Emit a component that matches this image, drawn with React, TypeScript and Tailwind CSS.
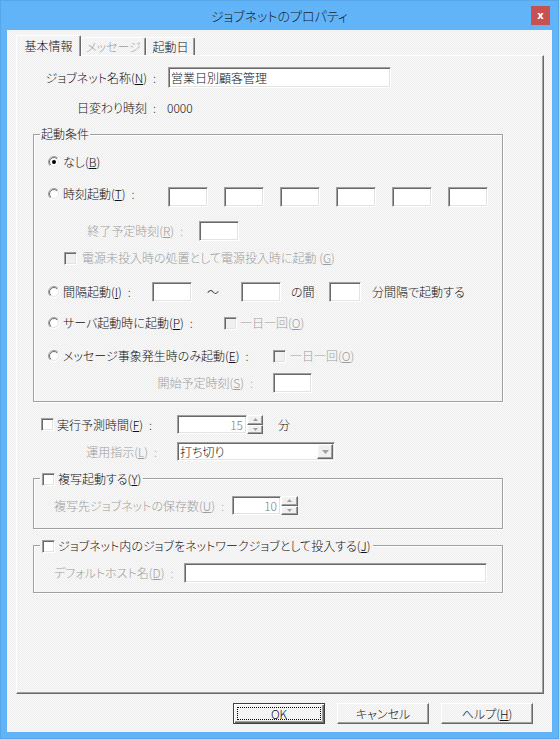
import React from "react";

const checker =
  "bg-[image:repeating-conic-gradient(#efefef_0_25%,#f8f8f8_0_50%)] bg-[length:2px_2px]";
const sunken =
  "border border-t-[#a0a0a0] border-l-[#a0a0a0] border-b-white border-r-white shadow-[inset_1px_1px_0_#696969,inset_-1px_-1px_0_#e3e3e3]";
const raised =
  "border border-t-white border-l-white border-b-[#696969] border-r-[#696969] shadow-[inset_-1px_-1px_0_#a0a0a0,inset_1px_1px_0_#f4f4f4]";

function Radio({ checked }: { checked?: boolean }) {
  return (
    <svg width="12" height="12" viewBox="0 0 12 12" className="shrink-0">
      <defs>
        <linearGradient id="ro" x1="0" y1="0" x2="1" y2="1">
          <stop offset="0.5" stopColor="#a0a0a0" />
          <stop offset="0.5" stopColor="#ffffff" />
        </linearGradient>
        <linearGradient id="ri" x1="0" y1="0" x2="1" y2="1">
          <stop offset="0.5" stopColor="#696969" />
          <stop offset="0.5" stopColor="#e3e3e3" />
        </linearGradient>
      </defs>
      <circle cx="6" cy="6" r="5.5" fill="none" stroke="url(#ro)" />
      <circle cx="6" cy="6" r="4.5" fill="#ffffff" stroke="url(#ri)" />
      {checked && <circle cx="6" cy="6" r="2" fill="#000000" />}
    </svg>
  );
}

function Check({ disabled }: { disabled?: boolean }) {
  return (
    <div
      className={`${sunken} w-[13px] h-[13px] shrink-0 ${
        disabled ? "bg-[#f0f0f0]" : "bg-white"
      }`}
    />
  );
}

function Box({ className }: { className: string }) {
  return <div className={`${sunken} bg-white shrink-0 ${className}`} />;
}

function Arrow({ up }: { up?: boolean }) {
  return (
    <svg width="5" height="3" viewBox="0 0 5 3">
      <path d={up ? "M2.5 0L5 3H0z" : "M0 0H5L2.5 3z"} fill="#a0a0a0" />
    </svg>
  );
}

function Spin({ value, w, bw }: { value: string; w: string; bw: string }) {
  return (
    <div className="flex h-[19px] shrink-0">
      <div
        className={`${sunken} bg-white h-full ${w} flex items-center justify-end pr-[3px] text-[#7a7a7a] leading-[16px]`}
      >
        {value}
      </div>
      <div className={`flex flex-col h-full ${bw}`}>
        <div className={`${raised} flex-1 flex items-center justify-center bg-[#f0f0f0]`}>
          <Arrow up />
        </div>
        <div className={`${raised} flex-1 flex items-center justify-center bg-[#f0f0f0]`}>
          <Arrow />
        </div>
      </div>
    </div>
  );
}

const gray = "text-[#9d9d9d]";
const groupBox =
  "relative ml-[16px] w-[470px] border border-[#a0a0a0] shadow-[inset_1px_1px_0_#fff,1px_1px_0_#fff] flex flex-col";

export default function App() {
  return (
    <div className="w-[559px] h-[739px] bg-[#62b4f9] border border-[#58a6ea] flex flex-col overflow-hidden font-['Noto_Sans_CJK_JP','Noto_Sans_CJK_SC',sans-serif] font-light text-[12px] leading-[16px] text-[#111] [font-feature-settings:'palt']">
      {/* title bar */}
      <div className="h-[29px] shrink-0 grid grid-cols-[1fr_auto_1fr] items-center">
        <div />
        <div className="text-[13px] text-[#1c1c1c] leading-[18px]">ジョブネットのプロパティ</div>
        <div className="flex justify-end pr-[8px]">
          <div className="w-[19px] h-[19px] bg-[#c75050] flex items-center justify-center text-white text-[10px] font-bold leading-none font-['DejaVu_Sans',sans-serif]">
            x
          </div>
        </div>
      </div>

      {/* client area */}
      <div className={`flex-1 mx-[6px] mb-[6px] ${checker} flex flex-col pt-[5px] pl-[9px] pr-[8px]`}>
        {/* tabs */}
        <div className="flex items-end h-[20px] shrink-0">
          <div className={`relative z-10 -mb-px w-[65px] h-[21px] ${checker} border-t border-l border-white border-r border-r-[#696969] shadow-[inset_-1px_0_0_#a0a0a0] rounded-t-[2px] flex items-start justify-center pt-[2px]`}>
            基本情報
          </div>
          <div className={`w-[65px] h-[18px] ${checker} border-t border-l border-white border-r border-r-[#696969] shadow-[inset_-1px_0_0_#a0a0a0] rounded-t-[2px] flex items-center justify-center ${gray}`}>
            メッセージ
          </div>
          <div className={`w-[49px] h-[18px] ${checker} border-t border-l border-white border-r border-r-[#696969] shadow-[inset_-1px_0_0_#a0a0a0] rounded-t-[2px] flex items-center justify-center`}>
            起動日
          </div>
        </div>

        {/* panel */}
        <div className="h-[639px] shrink-0 border-t border-l border-white border-r border-b border-r-[#696969] border-b-[#696969] shadow-[inset_-1px_-1px_0_#a0a0a0] flex flex-col">
          {/* name row */}
          <div className="flex items-center h-[21px] mt-[11px]">
            <div className="w-[139px] text-right">
              ジョブネット名称(<u>N</u>)<span className="ml-[6px]">:</span>
            </div>
            <div className={`${sunken} bg-white ml-[12px] w-[223px] h-[21px] flex items-center pl-[2px]`}>
              営業日別顧客管理
            </div>
          </div>
          {/* day change */}
          <div className="flex items-center h-[16px] mt-[12px]">
            <div className="w-[139px] text-right">
              日変わり時刻<span className="ml-[6px]">:</span>
            </div>
            <div className="ml-[11px]">0000</div>
          </div>

          {/* group 1 */}
          <div className={`${groupBox} mt-[18px] pt-[17px] pb-[8px]`}>
            <div className={`absolute left-[6px] top-[-9px] px-[1px] ${checker}`}>起動条件</div>

            <div className="h-[20px] flex items-center pl-[14px]">
              <Radio checked />
              <span className="pl-[3px]">なし(<u>B</u>)</span>
            </div>

            <div className="h-[20px] mt-[15px] flex items-start pl-[14px]">
              <div className="h-[16px] -mt-px flex items-center w-[120px] shrink-0">
                <Radio />
                <span className="pl-[3px]">
                  時刻起動(<u>T</u>)<span className="ml-[6px]">:</span>
                </span>
              </div>
              <Box className="w-[40px] h-[20px]" />
              <Box className="w-[40px] h-[20px] ml-[16px]" />
              <Box className="w-[40px] h-[20px] ml-[16px]" />
              <Box className="w-[40px] h-[20px] ml-[16px]" />
              <Box className="w-[40px] h-[20px] ml-[16px]" />
              <Box className="w-[40px] h-[20px] ml-[16px]" />
            </div>

            <div className="h-[20px] mt-[14px] flex items-center">
              <div className={`w-[149px] text-right ${gray}`}>
                終了予定時刻(<u>R</u>)<span className="ml-[6px]">:</span>
              </div>
              <Box className="w-[40px] h-[20px] ml-[16px]" />
            </div>

            <div className="h-[20px] mt-[7px] flex items-center pl-[30px]">
              <Check disabled />
              <span className={`ml-[5px] ${gray}`}>
                電源未投入時の処置として電源投入時に起動 (<u>G</u>)
              </span>
            </div>

            <div className="h-[20px] mt-[14px] flex items-center pl-[14px]">
              <Radio />
              <span className="w-[92px] pl-[3px] shrink-0">
                間隔起動(<u>I</u>)<span className="ml-[6px]">:</span>
              </span>
              <Box className="w-[40px] h-[20px]" />
              <span className="w-[49px] pl-[15px] shrink-0">～</span>
              <Box className="w-[40px] h-[20px]" />
              <span className="w-[48px] pl-[10px] shrink-0">の間</span>
              <Box className="w-[32px] h-[20px]" />
              <span className="pl-[11px]">分間隔で起動する</span>
            </div>

            <div className="h-[20px] mt-[11px] flex items-center pl-[14px]">
              <Radio />
              <span className="w-[164px] pl-[3px] shrink-0">
                サーバ起動時に起動(<u>P</u>)<span className="ml-[6px]">:</span>
              </span>
              <Check disabled />
              <span className={`ml-[3px] ${gray}`}>
                一日一回(<u>O</u>)
              </span>
            </div>

            <div className="h-[20px] mt-[13px] flex items-center pl-[14px]">
              <Radio />
              <span className="w-[213px] pl-[3px] shrink-0">
                メッセージ事象発生時のみ起動(<u>E</u>)<span className="ml-[6px]">:</span>
              </span>
              <Check disabled />
              <span className={`ml-[4px] ${gray}`}>
                一日一回(<u>O</u>)
              </span>
            </div>

            <div className="h-[20px] mt-[7px] flex items-center">
              <div className={`w-[219px] text-right ${gray}`}>
                開始予定時刻(<u>S</u>)<span className="ml-[6px]">:</span>
              </div>
              <Box className="w-[39px] h-[20px] ml-[20px]" />
            </div>
          </div>

          {/* expected run time */}
          <div className="h-[19px] mt-[13px] flex items-center pl-[24px]">
            <Check />
            <span className="w-[123px] pl-[3px] shrink-0">
              実行予測時間(<u>F</u>)<span className="ml-[6px]">:</span>
            </span>
            <Spin value="15" w="w-[70px]" bw="w-[16px]" />
            <span className="ml-[15px]">分</span>
          </div>

          <div className="h-[19px] mt-[8px] flex items-center">
            <div className={`w-[140px] text-right ${gray}`}>
              運用指示(<u>L</u>)<span className="ml-[6px]">:</span>
            </div>
            <div className={`${sunken} bg-white ml-[20px] w-[158px] h-[19px] flex items-center pr-px`}>
              <span className="flex-1 pl-[2px]">打ち切り</span>
              <div className={`${raised} w-[16px] h-[15px] bg-[#f0f0f0] flex items-center justify-center`}>
                <svg width="7" height="4" viewBox="0 0 7 4">
                  <path d="M0 0H7L3.5 4z" fill="#a0a0a0" />
                </svg>
              </div>
            </div>
          </div>

          {/* group 2 */}
          <div className={`${groupBox} mt-[17px] pt-[17px] pb-[13px]`}>
            <div className={`absolute left-[6px] top-[-8px] h-[16px] px-[2px] flex items-center gap-[3px] ${checker}`}>
              <Check />
              <span>
                複写起動する(<u>Y</u>)
              </span>
            </div>
            <div className="h-[19px] flex items-center pl-[20px]">
              <span className={`w-[178px] shrink-0 ${gray}`}>
                複写先ジョブネットの保存数(<u>U</u>)<span className="ml-[6px]">:</span>
              </span>
              <Spin value="10" w="w-[49px]" bw="w-[17px]" />
            </div>
          </div>

          {/* group 3 */}
          <div className={`${groupBox} mt-[16px] pt-[17px] pb-[9px]`}>
            <div className={`absolute left-[6px] top-[-8px] h-[16px] px-[2px] flex items-center gap-[3px] ${checker}`}>
              <Check />
              <span>
                ジョブネット内のジョブをネットワークジョブとして投入する(<u>J</u>)
              </span>
            </div>
            <div className="h-[20px] flex items-center pl-[20px]">
              <span className={`w-[130px] shrink-0 ${gray}`}>
                デフォルトホスト名(<u>D</u>)<span className="ml-[6px]">:</span>
              </span>
              <Box className="w-[303px] h-[20px]" />
            </div>
          </div>
        </div>

        {/* buttons */}
        <div className="mt-[9px] flex justify-end gap-[12px] pr-[11px]">
          <div className={`w-[92px] h-[21px] border border-[#404040] shadow-[inset_1px_1px_0_#fff,inset_-1px_-1px_0_#696969,inset_-2px_-2px_0_#a0a0a0] ${checker} flex p-[3px]`}>
            <div className="flex-1 border border-dotted border-black flex items-center justify-center leading-[12px]">
              OK
            </div>
          </div>
          <div className={`w-[92px] h-[21px] ${raised} ${checker} flex items-center justify-center`}>
            キャンセル
          </div>
          <div className={`w-[92px] h-[21px] ${raised} ${checker} flex items-center justify-center`}>
            ヘルプ(<u>H</u>)
          </div>
        </div>
      </div>
    </div>
  );
}
